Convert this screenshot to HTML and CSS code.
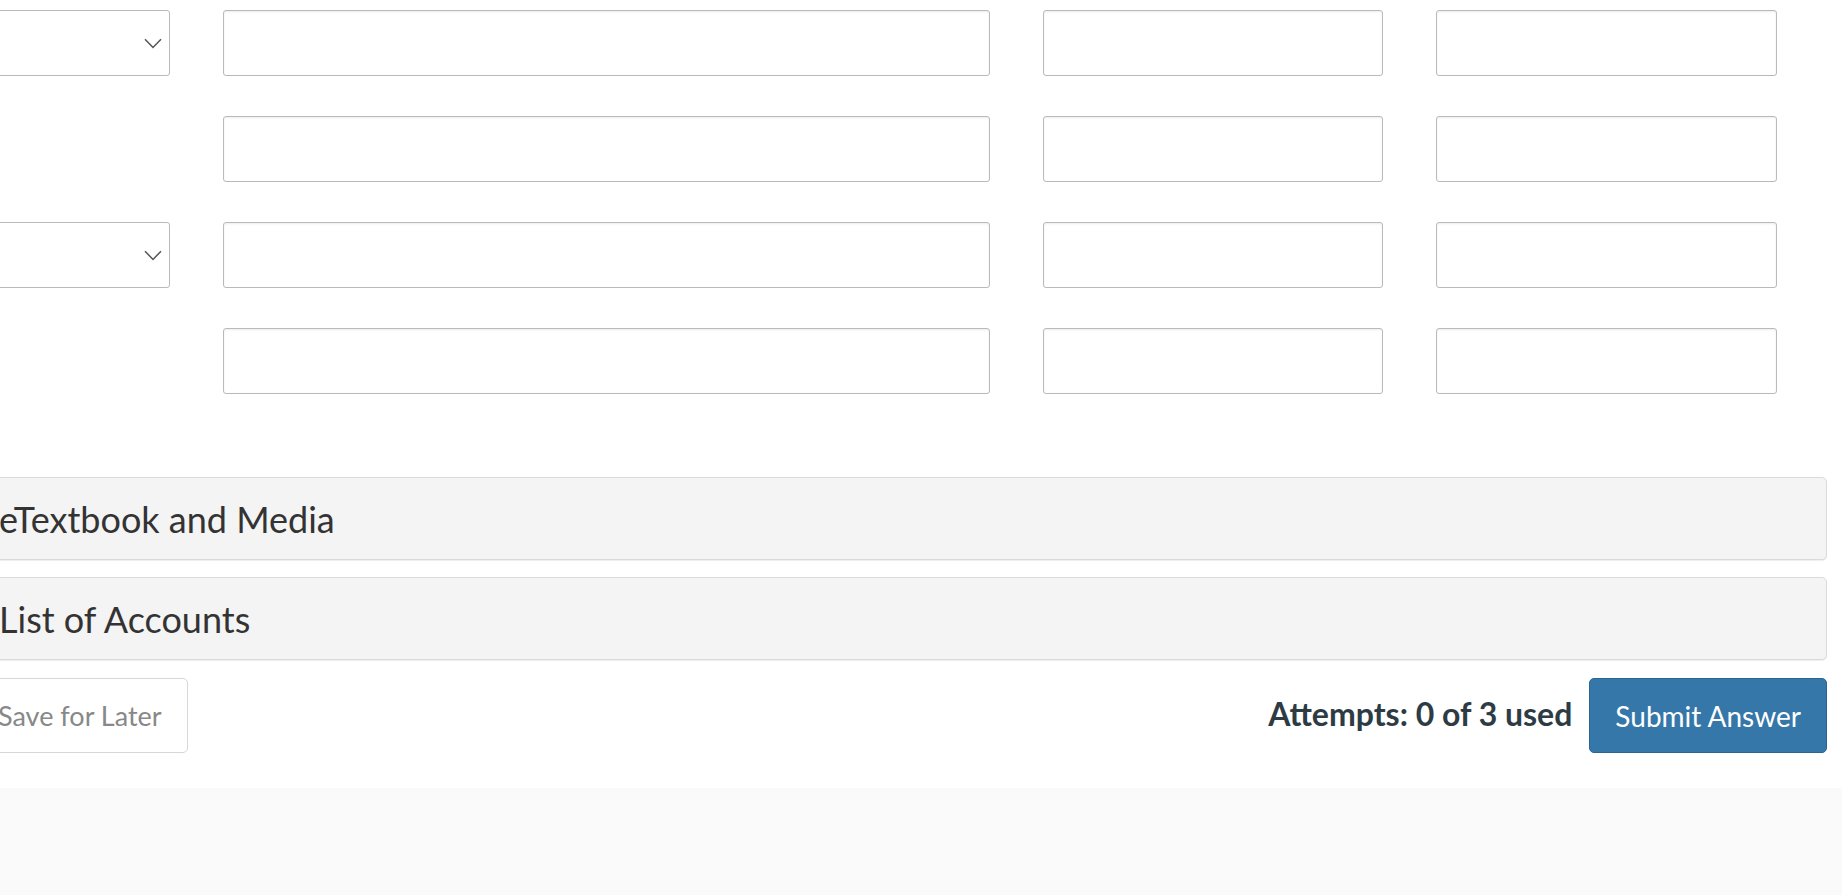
FILE: index.html
```html
<!DOCTYPE html>
<html lang="en">
<head>
<meta charset="utf-8">
<title>Question</title>
<link rel="stylesheet" href="styles.css">
</head>
<body>
<main class="page">
  <div class="entry-grid">
    <div class="select"><svg class="chev" width="18" height="11" viewBox="0 0 18 11"><path d="M1 1.2 L9 9.4 L17 1.2" fill="none" stroke="#555" stroke-width="1.5"/></svg></div>
    <div class="field"></div><div class="field"></div><div class="field"></div>

    <div class="empty"></div>
    <div class="field"></div><div class="field"></div><div class="field"></div>

    <div class="select"><svg class="chev" width="18" height="11" viewBox="0 0 18 11"><path d="M1 1.2 L9 9.4 L17 1.2" fill="none" stroke="#555" stroke-width="1.5"/></svg></div>
    <div class="field"></div><div class="field"></div><div class="field"></div>

    <div class="empty"></div>
    <div class="field"></div><div class="field"></div><div class="field"></div>
  </div>

  <div class="panels">
    <div class="panel">eTextbook and Media</div>
    <div class="panel">List of Accounts</div>
  </div>

  <div class="actions">
    <button class="btn btn-save">Save for Later</button>
    <div class="right">
      <span class="attempts">Attempts: 0 of 3 used</span>
      <button class="btn btn-submit">Submit Answer</button>
    </div>
  </div>
</main>
<footer class="footer"></footer>
</body>
</html>
```
FILE: styles.css
```css
html, body {
  margin: 0;
  padding: 0;
  background: #fff;
  overflow: hidden;
}
body {
  font-family: Lato, "Liberation Sans", sans-serif;
  color: #333;
}
.page {
  width: 1857px;
  margin-left: -30px;
  padding-top: 10px;
  padding-bottom: 35px;
}
.entry-grid {
  display: grid;
  grid-template-columns: 200px 767px 340px 341px;
  grid-auto-rows: 66px;
  column-gap: 53px;
  row-gap: 40px;
}
.field, .select {
  box-sizing: border-box;
  border: 1px solid #bababa;
  border-radius: 3px;
  background: #fff;
  box-shadow: inset 0 1px 2px rgba(0,0,0,0.08);
}
.select {
  display: flex;
  align-items: center;
  justify-content: flex-end;
  padding-right: 7px;
  box-shadow: none;
}
.chev { display: block; margin-top: 1px; }
.panels {
  margin-top: 83px;
  display: flex;
  flex-direction: column;
  gap: 17px;
}
.panel {
  box-sizing: border-box;
  height: 83px;
  background: #f4f4f4;
  border: 1px solid #dadada;
  border-radius: 5px;
  box-shadow: 0 1px 1px rgba(0,0,0,0.07);
  display: flex;
  align-items: center;
  padding-left: 28px;
  font-size: 36px;
  color: #333;
}
.actions {
  margin-top: 18px;
  display: flex;
  justify-content: space-between;
  align-items: center;
}
.right {
  display: flex;
  align-items: center;
  gap: 17px;
}
.btn {
  box-sizing: border-box;
  height: 75px;
  border-radius: 5px;
  font-family: Lato, "Liberation Sans", sans-serif;
  font-size: 28px;
  cursor: pointer;
}
.btn-save {
  margin-left: 2px;
  padding: 0 25px;
  font-size: 27px;
  background: #fff;
  color: #888;
  border: 1px solid #d7d7d7;
}
.btn-submit {
  padding: 0 25px;
  background: #3577a8;
  color: #fff;
  border: 1px solid #2b6594;
}
.attempts {
  font-size: 32px;
  font-weight: 700;
  color: #2d3b45;
  margin-top: -5px;
}
.footer {
  height: 108px;
  background: #fafafa;
}
```
